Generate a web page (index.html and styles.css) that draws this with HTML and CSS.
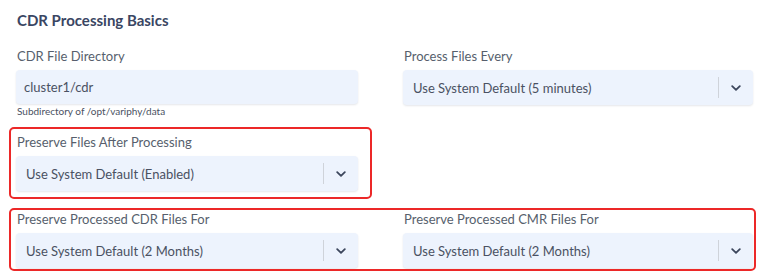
FILE: index.html
```html
<!doctype html>
<html>
<head>
<title>CDR Processing Basics</title>
<link rel="stylesheet" href="styles.css">
</head>
<body>
<div class="page">
  <h2 class="title">CDR Processing Basics</h2>

  <div class="row first">
    <div class="field">
      <label class="label">CDR File Directory</label>
      <div class="control input">cluster1/cdr</div>
      <div class="help">Subdirectory of /opt/variphy/data</div>
    </div>
    <div class="field">
      <label class="label">Process Files Every</label>
      <div class="control select">
        <span class="value">Use System Default (5 minutes)</span>
        <span class="sep"></span>
        <span class="arrow"><svg width="10" height="6" viewBox="0 0 10 6"><path d="M1.2 1.2 5 4.8 8.8 1.2" fill="none" stroke="#3c465c" stroke-width="1.8" stroke-linecap="round" stroke-linejoin="round"/></svg></span>
      </div>
    </div>
  </div>

  <div class="row second">
    <div class="field">
      <label class="label">Preserve Files After Processing</label>
      <div class="control select">
        <span class="value">Use System Default (Enabled)</span>
        <span class="sep"></span>
        <span class="arrow"><svg width="10" height="6" viewBox="0 0 10 6"><path d="M1.2 1.2 5 4.8 8.8 1.2" fill="none" stroke="#3c465c" stroke-width="1.8" stroke-linecap="round" stroke-linejoin="round"/></svg></span>
      </div>
    </div>
  </div>

  <div class="row">
    <div class="field">
      <label class="label">Preserve Processed CDR Files For</label>
      <div class="control select">
        <span class="value">Use System Default (2 Months)</span>
        <span class="sep"></span>
        <span class="arrow"><svg width="10" height="6" viewBox="0 0 10 6"><path d="M1.2 1.2 5 4.8 8.8 1.2" fill="none" stroke="#3c465c" stroke-width="1.8" stroke-linecap="round" stroke-linejoin="round"/></svg></span>
      </div>
    </div>
    <div class="field">
      <label class="label">Preserve Processed CMR Files For</label>
      <div class="control select">
        <span class="value">Use System Default (2 Months)</span>
        <span class="sep"></span>
        <span class="arrow"><svg width="10" height="6" viewBox="0 0 10 6"><path d="M1.2 1.2 5 4.8 8.8 1.2" fill="none" stroke="#3c465c" stroke-width="1.8" stroke-linecap="round" stroke-linejoin="round"/></svg></span>
      </div>
    </div>
  </div>

  <!-- review highlights -->
  <div class="mark mark-one"></div>
  <div class="mark mark-two"></div>
</div>
</body>
</html>
```

FILE: styles.css
```css
* {
  box-sizing: border-box;
}
body {
  margin: 0;
  background: #fff;
  font-family: Lato, "Noto Sans", sans-serif;
}
.page {
  position: relative;
  width: 768px;
  height: 280px;
  padding: 10px 0 0 16px;
  overflow: hidden;
}
.title {
  margin: 0 0 18px 1px;
  font-size: 15px;
  line-height: 20px;
  font-weight: 700;
  color: #3a4663;
}
.row {
  display: grid;
  grid-template-columns: 342px 350px;
  column-gap: 45px;
  margin-bottom: 20px;
}
.row.first {
  margin-bottom: 17px;
}
.field {
  display: flex;
  flex-direction: column;
}
.label {
  display: block;
  margin: 0 0 6px 1px;
  font-size: 13px;
  line-height: 16px;
  color: #575f6d;
}
.control {
  height: 35px;
  background: #edf3fd;
  border-radius: 4px;
  box-shadow: 0 1px 2px rgba(40, 50, 80, 0.12);
  font-size: 13px;
  color: #4a5162;
  display: flex;
  align-items: center;
}
.input {
  height: 34px;
  padding-left: 8px;
}
.select {
  padding-left: 10px;
}
.value {
  flex: 1;
}
.sep {
  width: 1px;
  height: 21px;
  background: #cfd3da;
}
.arrow {
  width: 34px;
  display: flex;
  justify-content: center;
  align-items: center;
}
.help {
  margin: 1px 0 0 1px;
  font-size: 10px;
  line-height: 12px;
  color: #4a5162;
}
.mark {
  position: absolute;
  border: 2px solid #ec2828;
  border-radius: 5px;
}
.mark-one {
  left: 9px;
  top: 127px;
  width: 363px;
  height: 72px;
}
.mark-two {
  left: 9px;
  top: 208px;
  width: 747px;
  height: 63px;
}
```
